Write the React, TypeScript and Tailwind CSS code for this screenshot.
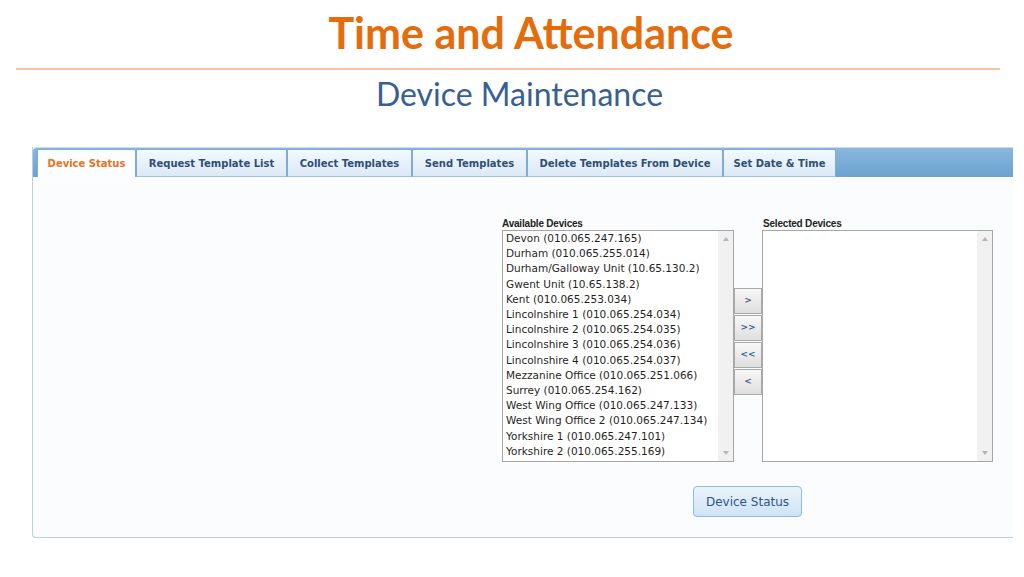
import React from 'react';

const devices = [
  'Devon (010.065.247.165)',
  'Durham (010.065.255.014)',
  'Durham/Galloway Unit (10.65.130.2)',
  'Gwent Unit (10.65.138.2)',
  'Kent (010.065.253.034)',
  'Lincolnshire 1 (010.065.254.034)',
  'Lincolnshire 2 (010.065.254.035)',
  'Lincolnshire 3 (010.065.254.036)',
  'Lincolnshire 4 (010.065.254.037)',
  'Mezzanine Office (010.065.251.066)',
  'Surrey (010.065.254.162)',
  'West Wing Office (010.065.247.133)',
  'West Wing Office 2 (010.065.247.134)',
  'Yorkshire 1 (010.065.247.101)',
  'Yorkshire 2 (010.065.255.169)',
];

const tabs = [
  { label: 'Device Status', w: 'w-[99px]', active: true },
  { label: 'Request Template List', w: 'w-[151px]' },
  { label: 'Collect Templates', w: 'w-[125px]' },
  { label: 'Send Templates', w: 'w-[115px]' },
  { label: 'Delete Templates From Device', w: 'w-[196px]' },
  { label: 'Set Date & Time', w: 'w-[113px]' },
];

function ScrollTrack() {
  return (
    <div className="flex w-[15px] flex-col items-center justify-between bg-[#f1f1f1] py-[6px]">
      <span className="h-0 w-0 border-x-[3px] border-b-[4px] border-x-transparent border-b-[#b5b5b5]" />
      <span className="h-0 w-0 border-x-[3px] border-t-[4px] border-x-transparent border-t-[#b5b5b5]" />
    </div>
  );
}

function ListBox({ items, width }: { items: string[]; width: string }) {
  return (
    <div className={`flex h-[232px] ${width} border border-[#a7a7a7] bg-white`}>
      <ul className="flex-1 overflow-hidden pl-[3px] text-[10.5px] leading-[15.2px] text-[#1f1f1f]">
        {items.map((d) => (
          <li key={d} className="whitespace-nowrap">{d}</li>
        ))}
      </ul>
      <ScrollTrack />
    </div>
  );
}

function MoveButton({ label }: { label: string }) {
  return (
    <button
      type="button"
      className="flex h-[26px] w-[28px] items-center justify-center border border-[#a9a9a9] bg-gradient-to-b from-[#f8f8f8] to-[#dedede] text-[9px] font-bold text-[#3b5f8a]"
    >
      {label}
    </button>
  );
}

export default function App() {
  return (
    <div className="h-[577px] w-[1024px] overflow-hidden bg-white" style={{ fontFamily: '"DejaVu Sans", sans-serif' }}>
      <div style={{ fontFamily: 'Lato, "Liberation Sans", sans-serif' }}>
        <h1 className="pl-[38px] pt-[9px] text-center text-[43px] font-bold leading-[48px] text-[#e46c0a]">Time and Attendance</h1>
        <div className="ml-[16px] mt-[11px] h-[2px] w-[984px] bg-[#f7c3a6]" />
        <h2 className="mt-[4px] pl-[15px] text-center text-[32px] leading-[40px] text-[#376092]">Device Maintenance</h2>
      </div>

      <div className="ml-[32px] mt-[33px] flex h-[391px] w-[981px] flex-col rounded-bl-[4px] border-b border-l border-[#b5d0ea] bg-[#fafcfd]">
        <div className="flex h-[30px] items-end rounded-tl-[4px] border-t border-[#c9ddef] bg-gradient-to-b from-[#8ab7dc] to-[#6aa2d1] pl-[4px]">
          {tabs.map((t) => (
            <div
              key={t.label}
              className={`flex h-[28px] ${t.w} items-center justify-center rounded-t-[2px] border-x border-t text-[10px] font-bold ${
                t.active
                  ? 'border-[#7fabd4] bg-[#fbfdfe] text-[#e8731e]'
                  : 'border-[#7fabd4] border-b border-b-[#9ec2e3] bg-gradient-to-b from-[#f4f9fd] to-[#dbe9f6] text-[#2f4f76]'
              }`}
            >
              {t.label}
            </div>
          ))}
        </div>

        <div className="flex flex-col items-start pl-[469px] pt-[40px]">
          <div className="flex items-start">
            <div className="flex flex-col">
              <span className="h-[13px] text-[10px] font-bold leading-[13px] tracking-[-0.2px] text-[#222]" style={{ fontFamily: '"Liberation Sans", sans-serif' }}>
                Available Devices
              </span>
              <ListBox items={devices} width="w-[232px]" />
            </div>
            <div className="flex flex-col gap-[1px] pt-[71px]">
              <MoveButton label=">" />
              <MoveButton label=">>" />
              <MoveButton label="<<" />
              <MoveButton label="<" />
            </div>
            <div className="flex flex-col">
              <span className="h-[13px] pl-[1px] text-[10px] font-bold leading-[13px] tracking-[-0.2px] text-[#222]" style={{ fontFamily: '"Liberation Sans", sans-serif' }}>
                Selected Devices
              </span>
              <ListBox items={[]} width="w-[231px]" />
            </div>
          </div>
          <div className="mt-[24px] flex w-[491px] justify-center">
            <button
              type="button"
              className="h-[31px] w-[109px] rounded-[4px] border border-[#8fbbe6] bg-gradient-to-b from-[#eaf3fc] to-[#cfe3f6] text-[12px] text-[#2d5585]"
            >
              Device Status
            </button>
          </div>
        </div>
      </div>
    </div>
  );
}
